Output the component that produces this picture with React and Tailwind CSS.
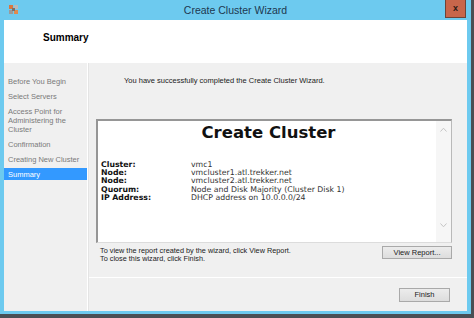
import React from 'react';

const NAV_ITEMS = [
  { label: ['Before You Begin'] },
  { label: ['Select Servers'] },
  { label: ['Access Point for', 'Administering the', 'Cluster'] },
  { label: ['Confirmation'] },
  { label: ['Creating New Cluster'] },
  { label: ['Summary'], active: true },
];

const REPORT_ROWS = [
  ['Cluster:', 'vmc1'],
  ['Node:', 'vmcluster1.atl.trekker.net'],
  ['Node:', 'vmcluster2.atl.trekker.net'],
  ['Quorum:', 'Node and Disk Majority (Cluster Disk 1)'],
  ['IP Address:', 'DHCP address on 10.0.0.0/24'],
];

function ClusterIcon() {
  return (
    <svg width="11" height="11" viewBox="0 0 11 11">
      <rect x="1" y="1" width="4" height="4" fill="#d9773f" />
      <rect x="6" y="1" width="4" height="4" fill="#b9b9b9" />
      <rect x="1" y="6" width="4" height="4" fill="#9a9a9a" />
      <rect x="6" y="6" width="4" height="4" fill="#e08a4f" />
      <rect x="4" y="4" width="3" height="3" fill="#7b6f6a" />
    </svg>
  );
}

function WinButton({ children, className }) {
  return (
    <div
      className={`flex items-center justify-center border border-[#a9a9a9] bg-gradient-to-b from-[#ececec] to-[#dddddd] text-[7.5px] text-[#1b1b1b] ${className}`}
    >
      {children}
    </div>
  );
}

export default function App() {
  return (
    <div className="w-[474px] h-[318px] bg-[#4a4f55] font-['Liberation_Sans',Arial,sans-serif]">
      <div className="w-[471px] h-[314px] bg-[#6dcaef] flex flex-col px-[4px] pb-[3px]">
        {/* Title bar */}
        <div className="h-[20px] grid grid-cols-[1fr_auto_1fr] items-start shrink-0">
          <div className="pl-[4px] pt-[4px]">
            <ClusterIcon />
          </div>
          <div className="text-[10.5px] leading-[20px] text-[#1d3850]">Create Cluster Wizard</div>
          <div className="flex justify-end pr-[1px]">
            <div className="w-[21px] h-[18px] bg-[#c8664b] border border-[#6e4438] border-t-0 flex items-center justify-center text-[9px] font-bold text-[#2a1a16] leading-none">
              x
            </div>
          </div>
        </div>

        {/* Body */}
        <div className="flex-1 flex flex-col bg-[#f0f0f0]">
          <div className="h-[43px] bg-white pl-[39px] pt-[12px] shrink-0">
            <div className="text-[10px] leading-[12px] font-bold text-black">Summary</div>
          </div>

          <div className="flex-1 flex">
            {/* Left navigation */}
            <div className="w-[84px] pt-[12px] flex flex-col gap-[3px] border-r border-white">
              {NAV_ITEMS.map((item) => (
                <div
                  key={item.label[0]}
                  className={`pl-[4px] py-[1.5px] text-[7.5px] leading-[9px] ${
                    item.active ? 'bg-[#3399ff] text-white' : 'text-[#7a7a7a]'
                  }`}
                >
                  {item.label.map((line) => (
                    <div key={line}>{line}</div>
                  ))}
                </div>
              ))}
            </div>

            {/* Content */}
            <div className="flex-1 flex flex-col border-l border-[#e4e4e4]">
              <div className="h-[56px] pl-[35px] pt-[13px] shrink-0">
                <div className="text-[7.5px] leading-[10px] text-[#1b1b1b]">
                  You have successfully completed the Create Cluster Wizard.
                </div>
              </div>

              <div className="h-[124px] ml-[7px] mr-[15px] flex bg-white border-t-2 border-l-2 border-[#969696] border-r border-b border-r-[#b9b9b9] border-b-[#dcdcdc] shrink-0">
                <div className="flex-1 pl-[3px] pt-[2px] font-['DejaVu_Sans',Verdana,sans-serif] text-[#111]">
                  <div className="text-center text-[16.5px] leading-[20px] font-bold">Create Cluster</div>
                  <div className="mt-[18px] grid grid-cols-[90px_1fr] text-[7.8px] leading-[8.2px]">
                    {REPORT_ROWS.map(([k, v], i) => (
                      <React.Fragment key={i}>
                        <div className="font-bold">{k}</div>
                        <div className="text-[#333]">{v}</div>
                      </React.Fragment>
                    ))}
                  </div>
                </div>
                <div className="w-[15px] bg-[#f6f6f6] flex flex-col items-center justify-between pt-[6px] pb-[14px] text-[#c4c4c4]">
                  <svg width="7" height="5" viewBox="0 0 7 5">
                    <path d="M0.5 4.5 L3.5 1.2 L6.5 4.5" fill="none" stroke="currentColor" strokeWidth="1" />
                  </svg>
                  <svg width="7" height="5" viewBox="0 0 7 5">
                    <path d="M0.5 0.5 L3.5 3.8 L6.5 0.5" fill="none" stroke="currentColor" strokeWidth="1" />
                  </svg>
                </div>
              </div>

              <div className="h-[34px] flex justify-between shrink-0">
                <div className="pl-[11px] pt-[3.5px] text-[7.3px] leading-[8.3px] text-[#1b1b1b]">
                  <div>To view the report created by the wizard, click View Report.</div>
                  <div>To close this wizard, click Finish.</div>
                </div>
                <WinButton className="w-[70px] h-[13px] mt-[2.7px] mr-[15px]">View Report...</WinButton>
              </div>

              <div className="h-px bg-white shrink-0" />

              <div className="flex-1 flex justify-end pt-[10px] pr-[17px]">
                <WinButton className="w-[51px] h-[14px]">Finish</WinButton>
              </div>
            </div>
          </div>
        </div>
      </div>
    </div>
  );
}
